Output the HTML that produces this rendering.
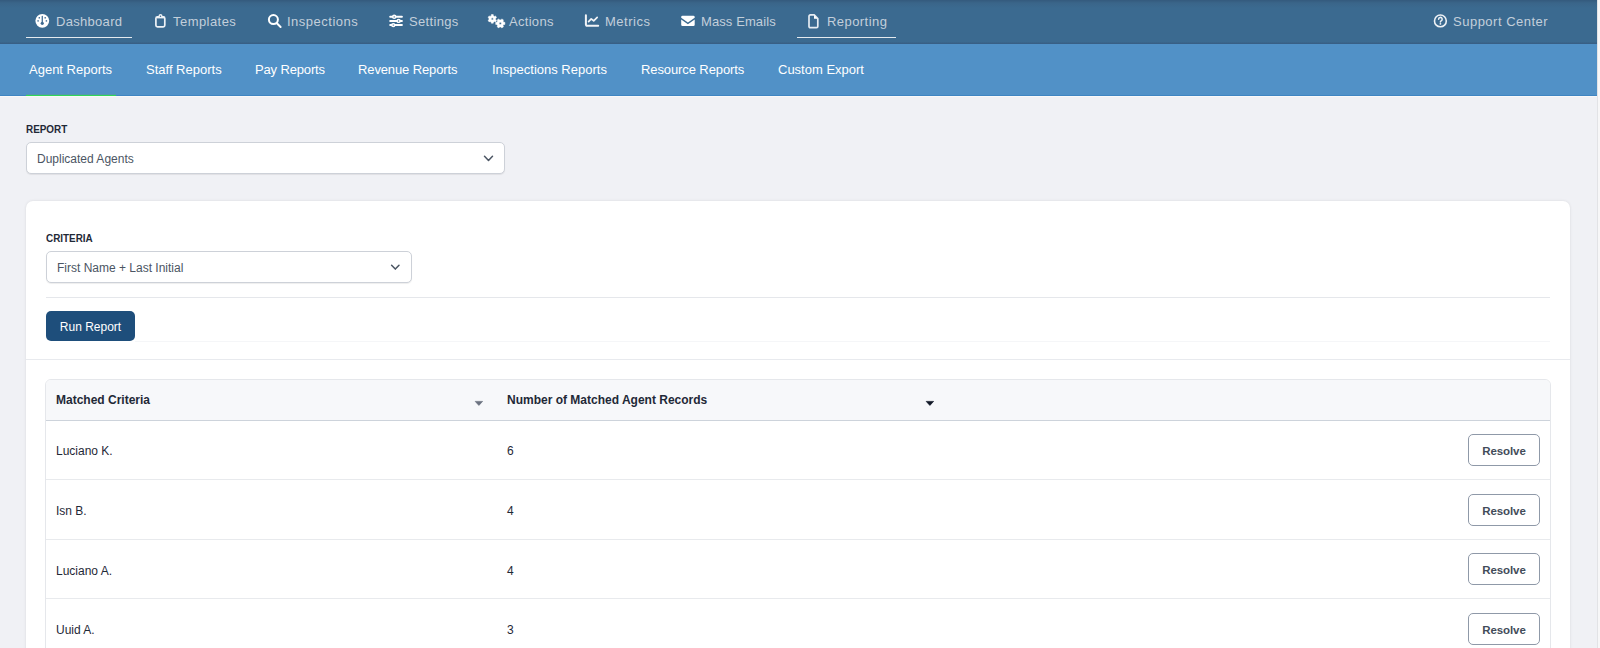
<!DOCTYPE html>
<html><head><meta charset="utf-8">
<style>
*{box-sizing:border-box;margin:0;padding:0}
html,body{width:1600px;height:648px;overflow:hidden}
body{background:#f0f1f5;font-family:"Liberation Sans",sans-serif;position:relative}
.abs{position:absolute}
#topnav{left:0;top:0;width:1597px;height:44px;background:#3b6a90;background:linear-gradient(#345a7d 0px,#3a6589 3px,#3b6a90 8px,#3b6a90 42px,#385f85 43px,#385f85 44px)}
.tn{position:absolute;top:0;height:44px;color:#c3cfdb;font-size:13px;letter-spacing:0.9px;white-space:nowrap}
.tn .t{position:absolute;top:14px;line-height:16px}
.tn svg{position:absolute}
.uline{position:absolute;top:37px;height:1px;background:#e4eaef}
#subnav{left:0;top:44px;width:1597px;height:53px;background:#5191c7;border-bottom:1px solid #f9f8f9;box-shadow:inset 0 -1px 0 #3f85c2}
.sn{position:absolute;top:62px;color:#fff;font-size:13px;line-height:16px;white-space:nowrap}
#green{left:26px;top:95px;width:90px;height:1px;background:#30d65a;box-shadow:0 -0.5px 0 #5aa38f}
#scroll{left:1597px;top:0;width:3px;height:648px;background:#f7f7f8;border-left:1px solid #e2e3e6}
.label{position:absolute;font-size:11px;line-height:13px;font-weight:bold;color:#1f2937;transform-origin:0 0;transform:scaleX(0.9)}
.select{position:absolute;height:32px;background:#fff;border:1px solid #cdd1d8;border-radius:5px;box-shadow:0 1px 1px rgba(0,0,0,0.07)}
.select .v{position:absolute;left:10px;top:9px;font-size:12px;color:#4b5563;line-height:14px}
.select svg{position:absolute;top:0;right:0}
#card{left:26px;top:201px;width:1544px;height:460px;background:#fff;border-radius:7px;box-shadow:0 0 3px rgba(0,0,0,0.1)}
.hline{position:absolute;height:1px}
#run{left:46px;top:311px;width:89px;height:30px;background:#1e4e7b;border-radius:5px;color:#fff;font-size:12px;line-height:32px;text-align:center}
#table{left:45px;top:379px;width:1506px;height:300px;border:1px solid #e5e7eb;border-radius:6px;background:#fff;overflow:hidden}
#thead{position:absolute;left:0;top:0;width:100%;height:41px;background:#f7f8fa;border-bottom:1px solid #cdd3db}
.th{position:absolute;top:13px;font-size:12px;font-weight:bold;color:#1f2937;line-height:14px}
.row{position:absolute;left:0;width:100%;border-bottom:1px solid #e8eaed}
.td{position:absolute;font-size:12px;color:#1f2937;line-height:14px}
.btn{position:absolute;width:72px;height:32px;border:1px solid #8f99a8;border-radius:5px;background:#fff;font-size:11.5px;font-weight:bold;color:#434c5a;line-height:33px;text-align:center;letter-spacing:-0.1px}
</style></head><body>
<div id="topnav" class="abs"></div>
<div id="subnav" class="abs"></div>

<svg class="abs" style="left:0;top:0" width="1600" height="44" viewBox="0 0 1600 44" fill="none">
<!-- dashboard -->
<circle cx="42.3" cy="20.8" r="6.9" fill="#fff"/>
<g fill="#3d6991">
<rect x="41.65" y="15.8" width="1.25" height="7" rx="0.6"/>
<circle cx="42.27" cy="23.3" r="1.6"/>
<rect x="38.6" y="17.1" width="1.4" height="1.4"/>
<rect x="44.5" y="17.1" width="1.4" height="1.4"/>
<rect x="37.4" y="20.2" width="1.4" height="1.4"/>
<rect x="45.7" y="20.2" width="1.4" height="1.4"/>
</g>
<!-- clipboard -->
<rect x="155.9" y="16.9" width="8.9" height="10" rx="1.6" stroke="#eef2f6" stroke-width="1.7"/>
<path d="M157 16.2h7.2v2.2h-7.2z" fill="#eef2f6"/>
<circle cx="160.5" cy="16.1" r="2" fill="#eef2f6"/>
<circle cx="160.5" cy="16.3" r="0.7" fill="#3d6991"/>
<!-- search -->
<circle cx="273.4" cy="19.6" r="4.5" stroke="#fff" stroke-width="2"/>
<path d="M276.6 23L280.6 27" stroke="#fff" stroke-width="2" stroke-linecap="round"/>
<!-- sliders -->
<path d="M390.2 16.8H401.9M390.2 20.9H401.9M390.2 25.1H401.9" stroke="#fff" stroke-width="2" stroke-linecap="round"/>
<g fill="#fff"><circle cx="394.2" cy="16.7" r="2.2"/><circle cx="398.6" cy="20.9" r="2.2"/><circle cx="393.3" cy="25.1" r="2.2"/></g>
<g fill="#3d6991"><circle cx="394.2" cy="16.9" r="0.65"/><circle cx="398.6" cy="21.0" r="0.65"/><circle cx="393.3" cy="25.1" r="0.65"/></g>
<!-- gears -->
<path fill="#fff" fill-rule="evenodd" stroke="#fff" stroke-width="0.5" stroke-linejoin="round" d="M491.34 14.61 L493.26 14.61 L493.32 15.66 L494.60 16.40 L495.54 15.92 L496.50 17.58 L495.62 18.16 L495.62 19.64 L496.50 20.22 L495.54 21.88 L494.60 21.40 L493.32 22.14 L493.26 23.19 L491.34 23.19 L491.28 22.14 L490.00 21.40 L489.06 21.88 L488.10 20.22 L488.98 19.64 L488.98 18.16 L488.10 17.58 L489.06 15.92 L490.00 16.40 L491.28 15.66ZM493.35 18.90A1.05 1.05 0 1 0 491.25 18.90A1.05 1.05 0 1 0 493.35 18.90Z"/>
<path fill="#fff" fill-rule="evenodd" stroke="#fff" stroke-width="0.5" stroke-linejoin="round" d="M501.71 18.92 L503.48 19.94 L502.95 20.96 L503.74 22.32 L504.89 22.37 L504.89 24.43 L503.74 24.48 L502.95 25.84 L503.48 26.86 L501.71 27.88 L501.09 26.91 L499.51 26.91 L498.89 27.88 L497.12 26.86 L497.65 25.84 L496.86 24.48 L495.71 24.43 L495.71 22.37 L496.86 22.32 L497.65 20.96 L497.12 19.94 L498.89 18.92 L499.51 19.89 L501.09 19.89ZM501.45 23.40A1.15 1.15 0 1 0 499.15 23.40A1.15 1.15 0 1 0 501.45 23.40Z"/>
<!-- chart -->
<path d="M585.9 15.2V24.6a1.2 1.2 0 0 0 1.2 1.2H598.2" stroke="#f2f4f7" stroke-width="2" stroke-linecap="round"/>
<path d="M588.6 21.6L591.2 18.9L593.7 20.8L597.2 17.4" stroke="#f2f4f7" stroke-width="1.7" stroke-linecap="round" stroke-linejoin="round"/>
<!-- envelope -->
<path fill="#fff" d="M681.2 17.1a1.3 1.3 0 0 1 1.3-1.3h10.9a1.3 1.3 0 0 1 1.3 1.3v0.6l-6.8 4.8l-6.7-4.8z"/>
<path fill="#fff" d="M681.2 19.4l6.7 4.8l6.8-4.8v5.3a1.3 1.3 0 0 1-1.3 1.3h-10.9a1.3 1.3 0 0 1-1.3-1.3z"/>
<!-- file -->
<path d="M809 16.2a1.3 1.3 0 0 1 1.3-1.3h3.9l3.6 3.6v7.9a1.3 1.3 0 0 1-1.3 1.3h-6.2a1.3 1.3 0 0 1-1.3-1.3z" stroke="#e6ecf2" stroke-width="1.7" stroke-linejoin="round"/>
<path d="M814 15.2v3.6h3.6z" fill="#fff"/>
<!-- question -->
<circle cx="1440.4" cy="20.9" r="5.9" stroke="#eef2f6" stroke-width="1.6"/>
<path d="M1438.6 19.2a1.8 1.8 0 1 1 2.6 1.6c-0.6 0.3-0.8 0.6-0.8 1.2" stroke="#eef2f6" stroke-width="1.5" stroke-linecap="round"/>
<circle cx="1440.4" cy="23.8" r="0.9" fill="#eef2f6"/>
</svg>
<!-- top nav items -->
<div class="tn" style="left:0;width:1597px">
  <span class="t" style="left:56px;letter-spacing:0.3px">Dashboard</span>
  <span class="t" style="left:173px;letter-spacing:0.45px">Templates</span>
  <span class="t" style="left:287px;letter-spacing:0.5px">Inspections</span>
  <span class="t" style="left:409px;letter-spacing:0.33px">Settings</span>
  <span class="t" style="left:509px;letter-spacing:0.3px">Actions</span>
  <span class="t" style="left:605px;letter-spacing:0.5px">Metrics</span>
  <span class="t" style="left:701px;letter-spacing:0.1px">Mass Emails</span>
  <span class="t" style="left:827px;letter-spacing:0.44px">Reporting</span>
  <span class="t" style="left:1453px;letter-spacing:0.5px">Support Center</span>
</div>
<div class="uline" style="left:26px;width:106px"></div>
<div class="uline" style="left:797px;width:99px"></div>

<!-- sub nav -->
<span class="sn" style="left:29px">Agent Reports</span>
<span class="sn" style="left:146px">Staff Reports</span>
<span class="sn" style="left:255px;letter-spacing:-0.15px">Pay Reports</span>
<span class="sn" style="left:358px;letter-spacing:-0.12px">Revenue Reports</span>
<span class="sn" style="left:492px">Inspections Reports</span>
<span class="sn" style="left:641px;letter-spacing:-0.1px">Resource Reports</span>
<span class="sn" style="left:778px">Custom Export</span>
<div id="green" class="abs"></div>

<div class="label" style="left:26px;top:123px">REPORT</div>
<div class="select" style="left:26px;top:142px;width:479px"><span class="v">Duplicated Agents</span><svg width="40" height="30" viewBox="0 0 40 30"><path d="M20.5 13.3L24.5 17.5L28.5 13.3" fill="none" stroke="#4b5563" stroke-width="1.5" stroke-linecap="round" stroke-linejoin="round"/></svg></div>

<div id="card" class="abs"></div>
<div class="label" style="left:46px;top:232px">CRITERIA</div>
<div class="select" style="left:46px;top:251px;width:366px"><span class="v">First Name + Last Initial</span><svg width="40" height="30" viewBox="0 0 40 30"><path d="M20.6 13.3L24.3 17.1L28.0 13.3" fill="none" stroke="#4b5563" stroke-width="1.5" stroke-linecap="round" stroke-linejoin="round"/></svg></div>
<div class="hline" style="left:46px;top:297px;width:1504px;background:#e5e7eb"></div>
<div id="run" class="abs">Run Report</div>
<div class="hline" style="left:135px;top:341px;width:1415px;background:#f5f6f8"></div>
<div class="hline" style="left:26px;top:359px;width:1544px;background:#e8eaee"></div>

<div id="table" class="abs">
  <div id="thead">
    <span class="th" style="left:10px">Matched Criteria</span>
    <span class="th" style="left:461px">Number of Matched Agent Records</span>
  </div>
  <div class="row" style="top:41px;height:59px"><span class="td" style="left:10px;top:23px">Luciano K.</span><span class="td" style="left:461px;top:23px">6</span><span class="btn" style="left:1422px;top:13px">Resolve</span></div>
  <div class="row" style="top:100px;height:60px"><span class="td" style="left:10px;top:24px">Isn B.</span><span class="td" style="left:461px;top:24px">4</span><span class="btn" style="left:1422px;top:14px">Resolve</span></div>
  <div class="row" style="top:160px;height:59px"><span class="td" style="left:10px;top:24px">Luciano A.</span><span class="td" style="left:461px;top:24px">4</span><span class="btn" style="left:1422px;top:13px">Resolve</span></div>
  <div class="row" style="top:219px;height:60px"><span class="td" style="left:10px;top:24px">Uuid A.</span><span class="td" style="left:461px;top:24px">3</span><span class="btn" style="left:1422px;top:14px">Resolve</span></div>
</div>

<svg class="abs" style="left:0;top:0" width="1600" height="648" viewBox="0 0 1600 648" style="pointer-events:none"><path d="M475.2 401.4H482.6L478.9 405.4Z" fill="#6b7280" stroke="#6b7280" stroke-width="0.7" stroke-linejoin="round"/><path d="M926.2 401.4H933.6L929.9 405.4Z" fill="#111827" stroke="#111827" stroke-width="0.7" stroke-linejoin="round"/></svg>
<div id="scroll" class="abs"></div>
</body></html>
